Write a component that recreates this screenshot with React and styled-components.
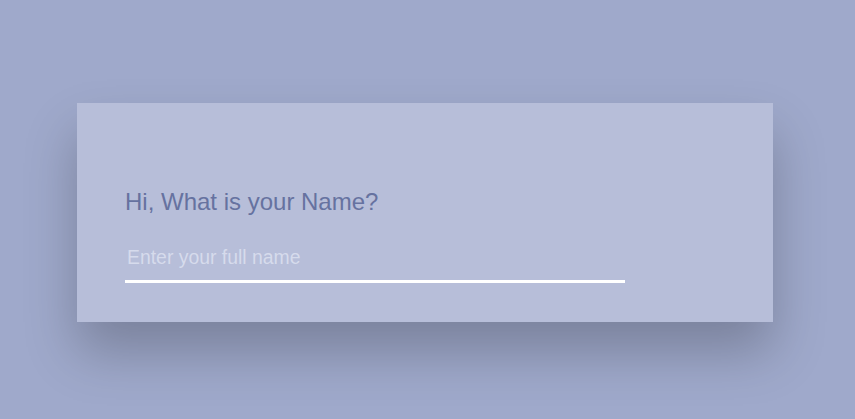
import React from "react";
import styled, { createGlobalStyle } from "styled-components";

const Global = createGlobalStyle`
  html, body { margin: 0; padding: 0; background: #9fa9cb; }
  body { font-family: "Liberation Sans", Arial, sans-serif; }
`;

const Page = styled.div`
  width: 855px;
  height: 419px;
  display: flex;
  padding: 103px 0 0 77px;
  box-sizing: border-box;
`;

const Card = styled.div`
  width: 696px;
  height: 219px;
  box-sizing: border-box;
  background: #b7bed9;
  padding: 85px 48px 0 48px;
  box-shadow: 0 30px 50px rgba(0, 0, 0, 0.23);
  display: flex;
  flex-direction: column;
`;

const Title = styled.h2`
  margin: 0;
  font-weight: normal;
  font-size: 24px;
  line-height: 28px;
  color: #6672a0;
`;

const Input = styled.input`
  margin-top: 26px;
  width: 500px;
  box-sizing: border-box;
  border: none;
  border-bottom: 3px solid #ffffff;
  background: transparent;
  outline: none;
  font-family: "Liberation Sans", Arial, sans-serif;
  font-size: 19.4px;
  line-height: 22px;
  height: 41px;
  padding: 4px 2px 12px 2px;
  color: #ffffff;
  &::placeholder { color: #d6dbec; }
`;

export default function App() {
  return (
    <>
      <Global />
      <Page>
        <Card>
          <Title>Hi, What is your Name?</Title>
          <Input placeholder="Enter your full name" />
        </Card>
      </Page>
    </>
  );
}
